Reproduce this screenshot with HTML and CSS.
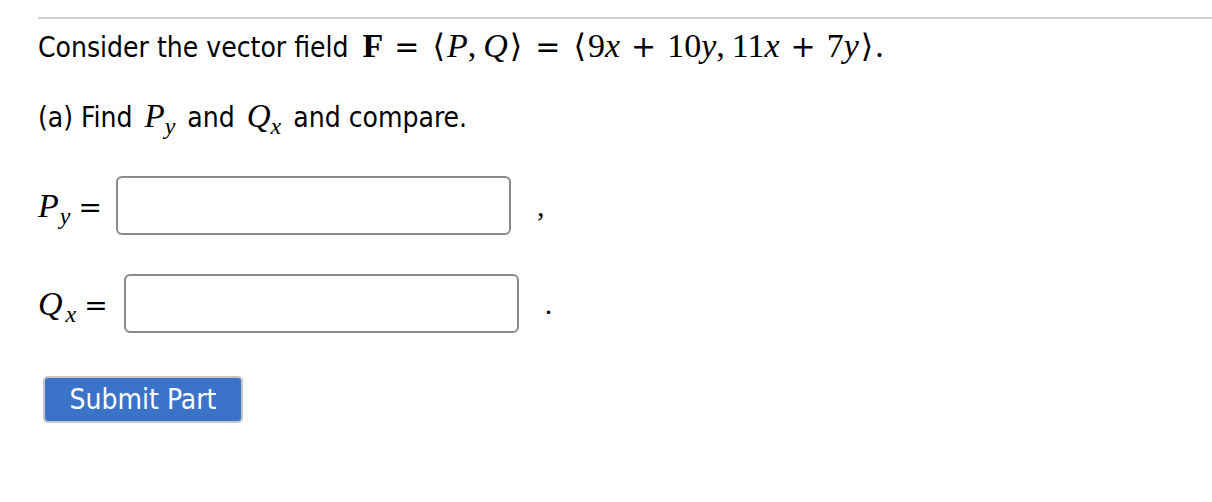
FILE: index.html
```html
<!DOCTYPE html>
<html lang="en">
<head>
  <meta charset="UTF-8">
  <title>Vector Field Question</title>
  <link rel="stylesheet" href="styles.css">
</head>
<body>

  <div class="question">
    <p class="prompt">
      Consider the vector field
      <span class="math"><b class="bold">F</b><span class="op">=</span><span class="br">⟨</span><i>P</i>,<i class="sp">Q</i><span class="br">⟩</span><span class="op">=</span><span class="br">⟨</span>9<i>x</i><span class="op">+</span>10<i>y</i>,<span class="sp">11</span><i>x</i><span class="op">+</span>7<i>y</i><span class="br">⟩</span>.</span>
    </p>

    <p class="part">
      (a) Find <span class="math"><i>P</i><sub><i>y</i></sub></span> and
      <span class="math"><i>Q</i><sub><i>x</i></sub></span> and compare.
    </p>

    <div class="answer-row">
      <span class="math label"><i>P</i><sub><i>y</i></sub><span class="op">=</span></span>
      <input class="answer-box" type="text" aria-label="P sub y">
      <span class="punct">,</span>
    </div>

    <div class="answer-row">
      <span class="math label label-q"><i>Q</i><sub><i>x</i></sub><span class="op">=</span></span>
      <input class="answer-box" type="text" aria-label="Q sub x">
      <span class="punct">.</span>
    </div>

    <button class="submit-btn">Submit Part</button>
  </div>

</body>
</html>
```

FILE: styles.css
```css
body {
  margin: 0;
  background: #fff;
  color: #000;
  font-family: "DejaVu Sans Condensed", "DejaVu Sans", Verdana, sans-serif;
  font-size: 28px;
}

.question {
  margin-top: 17px;
  margin-left: 38px;
  border-top: 2px solid #cfcfcf;
  padding-top: 10px;
}

.prompt {
  margin: 0;
  line-height: 38px;
}

.prompt .math {
  margin-left: 6px;
}

.part {
  margin: 32px 0 0;
  line-height: 38px;
}

.math {
  font-family: "Liberation Serif", "Times New Roman", serif;
  font-size: 34px;
  line-height: 1;
}

.math i {
  font-style: italic;
}

.math .sp {
  margin-left: 7px;
}

.math .bold {
  font-weight: bold;
  font-style: normal;
}

.math .op {
  font-family: "DejaVu Sans", sans-serif;
  font-size: 30px;
  margin: 0 11px;
}

.math .br {
  font-family: "DejaVu Serif", serif;
  font-size: 32px;
  margin: 0 2px;
}

.math sub {
  font-size: 24px;
  vertical-align: -7px;
  line-height: 0;
}

.part .math {
  font-size: 33px;
  margin: 0 4px;
}

.answer-row {
  display: flex;
  align-items: center;
  height: 59px;
}

.part + .answer-row {
  margin-top: 39px;
}

.answer-row + .answer-row {
  margin-top: 39px;
}

.label {
  white-space: nowrap;
  font-size: 34px;
}

.label sub {
  margin-left: 1px;
}

.label-q sub {
  margin-left: 3px;
}

.label .op {
  font-size: 28px;
  margin: 0 14px 0 8px;
}

.label-q .op {
  margin-right: 16px;
}

.answer-box {
  width: 395px;
  height: 59px;
  margin: 0;
  box-sizing: border-box;
  border: 2px solid #8a8a8a;
  border-radius: 6px;
  background: #fff;
}

.punct {
  margin-left: 26px;
  font-family: "Liberation Serif", serif;
  font-size: 30px;
}

.submit-btn {
  display: block;
  margin: 43px 0 0 5px;
  width: 200px;
  height: 47px;
  padding: 0;
  background: #3b73c9;
  color: #fff;
  border: 2px solid #c8c8c8;
  border-radius: 5px;
  font-family: "DejaVu Sans Condensed", "DejaVu Sans", Verdana, sans-serif;
  font-size: 28px;
  cursor: pointer;
}
```
